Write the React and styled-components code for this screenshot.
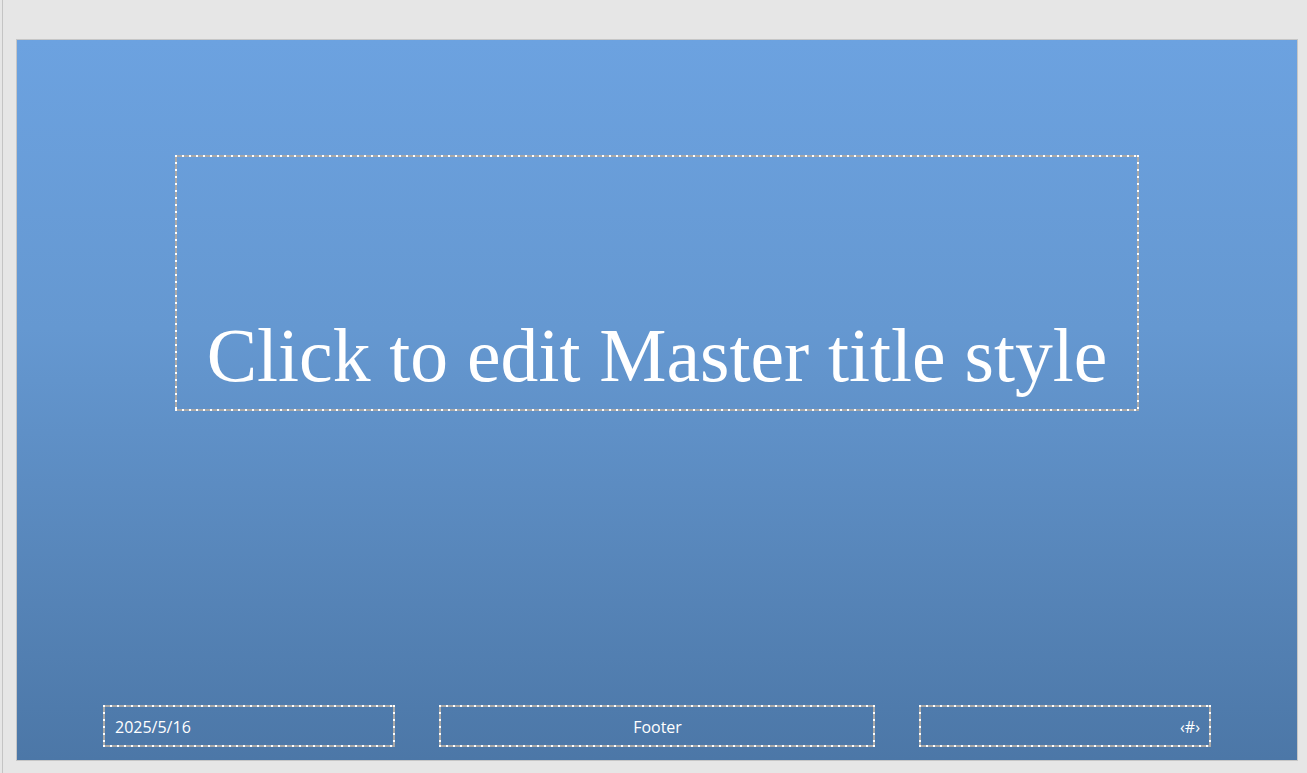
import React from "react";
import styled, { createGlobalStyle } from "styled-components";

const GlobalStyle = createGlobalStyle`
  html, body {
    margin: 0;
    padding: 0;
    background: #e6e6e6;
    font-family: "Open Sans", "Liberation Sans", sans-serif;
  }
`;

const Page = styled.div`
  width: 1307px;
  height: 773px;
  box-sizing: border-box;
  padding-left: 2px;
  overflow: hidden;
`;

const Workspace = styled.div`
  height: 100%;
  box-sizing: border-box;
  border-left: 1px solid #c4c4c4;
  padding: 39px 0 0 13px;
`;

const Slide = styled.div`
  width: 1280px;
  height: 720px;
  border: 1px solid #c6c6c6;
  background: linear-gradient(180deg, #6ca2e0 0%, #6598d1 40%, #4c77a7 100%);
  display: flex;
  flex-direction: column;
  align-items: center;
`;

const Placeholder = styled.div`
  box-sizing: border-box;
  display: flex;
  color: #ffffff;
  background:
    repeating-linear-gradient(90deg, #fff 0 2px, transparent 2px 7px) top left / 100% 2px no-repeat,
    repeating-linear-gradient(90deg, #fff 0 2px, transparent 2px 7px) bottom left / 100% 2px no-repeat,
    repeating-linear-gradient(180deg, #fff 0 2px, transparent 2px 7px) top left / 2px 100% no-repeat,
    repeating-linear-gradient(180deg, #fff 0 2px, transparent 2px 7px) top right / 2px 100% no-repeat,
    linear-gradient(#a9a9a9, #a9a9a9) top left / 100% 2px no-repeat,
    linear-gradient(#a9a9a9, #a9a9a9) bottom left / 100% 2px no-repeat,
    linear-gradient(#a9a9a9, #a9a9a9) top left / 2px 100% no-repeat,
    linear-gradient(#a9a9a9, #a9a9a9) top right / 2px 100% no-repeat;
`;

const TitleBox = styled(Placeholder)`
  width: 964px;
  height: 256px;
  margin-top: 115px;
  align-items: flex-end;
  justify-content: center;
  padding-bottom: 12px;
`;

const Title = styled.h1`
  margin: 0;
  font-family: "Liberation Serif", "Times New Roman", serif;
  font-weight: 400;
  font-size: 75.6px;
  line-height: normal;
  white-space: nowrap;
`;

const FooterRow = styled.div`
  margin-top: auto;
  margin-bottom: 13px;
  display: flex;
  gap: 44px;
`;

const FooterBox = styled(Placeholder)`
  width: ${(p) => p.$w}px;
  height: 42px;
  align-items: center;
  justify-content: ${(p) => p.$align};
  padding: 1px 11px 0 12px;
  font-size: 16px;
  line-height: 1;
`;

export default function App() {
  return (
    <>
      <GlobalStyle />
      <Page>
        <Workspace>
          <Slide>
            <TitleBox>
              <Title>Click to edit Master title style</Title>
            </TitleBox>
            <FooterRow>
              <FooterBox $w={292} $align="flex-start">2025/5/16</FooterBox>
              <FooterBox $w={436} $align="center">Footer</FooterBox>
              <FooterBox $w={292} $align="flex-end">‹#›</FooterBox>
            </FooterRow>
          </Slide>
        </Workspace>
      </Page>
    </>
  );
}
